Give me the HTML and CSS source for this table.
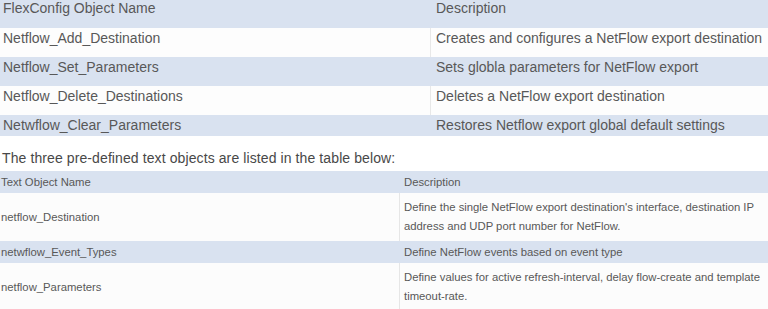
FILE: index.html
```html
<!DOCTYPE html>
<html lang="en">
<head>
    <meta charset="UTF-8">
    <meta name="viewport" content="width=device-width, initial-scale=1.0">
    <title>NetFlow FlexConfig Objects</title>
    <link rel="stylesheet" href="styles.css">
</head>
<body>

    <!-- FlexConfig objects -->
    <table class="flex-table">
        <tr class="head">
            <td class="name">FlexConfig Object Name</td>
            <td class="desc">Description</td>
        </tr>
        <tr>
            <td class="name">Netflow_Add_Destination</td>
            <td class="desc">Creates and configures a NetFlow export destination</td>
        </tr>
        <tr class="shade">
            <td class="name">Netflow_Set_Parameters</td>
            <td class="desc">Sets globla parameters for NetFlow export</td>
        </tr>
        <tr>
            <td class="name">Netflow_Delete_Destinations</td>
            <td class="desc">Deletes a NetFlow export destination</td>
        </tr>
        <tr class="shade last">
            <td class="name">Netwflow_Clear_Parameters</td>
            <td class="desc">Restores Netflow export global default settings</td>
        </tr>
    </table>

    <p class="intro">The three pre-defined text objects are listed in the table below:</p>

    <!-- Text objects -->
    <table class="text-table">
        <tr class="head">
            <td class="name">Text Object Name</td>
            <td class="desc">Description</td>
        </tr>
        <tr class="tall">
            <td class="name">netflow_Destination</td>
            <td class="desc">Define the single NetFlow export destination's interface, destination IP address and UDP port number for NetFlow.</td>
        </tr>
        <tr class="shade">
            <td class="name">netwflow_Event_Types</td>
            <td class="desc">Define NetFlow events based on event type</td>
        </tr>
        <tr class="tall">
            <td class="name">netflow_Parameters</td>
            <td class="desc">Define values for active refresh-interval, delay flow-create and template timeout-rate.</td>
        </tr>
    </table>

</body>
</html>
```

FILE: styles.css
```css
/* General styles */
body {
    margin: 0;
    padding: 0;
    background: #fff;
    font-family: "Liberation Sans", Arial, sans-serif;
    color: #585858;
    overflow: hidden;
}

table {
    width: 100%;
    border-collapse: collapse;
    table-layout: fixed;
}

td {
    padding: 0;
    vertical-align: middle;
    text-align: left;
}

/* FlexConfig table */
.flex-table {
    font-size: 14px;
    line-height: 16px;
}

.flex-table tr {
    height: 29px;
    background-color: #fdfdfd;
}

.flex-table td {
    vertical-align: top;
    padding-top: 2px;
}

.flex-table tr.head,
.flex-table tr.shade {
    background-color: #d9e2f0;
}

.flex-table tr.head {
    height: 28px;
}

.flex-table tr.head td {
    padding-top: 0;
}

.flex-table tr.last {
    height: 21px;
}

.flex-table .name {
    width: 427px;
    padding-left: 3px;
}

.flex-table .desc {
    padding-left: 5px;
    border-left: 1px solid #e8e8e8;
    white-space: nowrap;
}

.flex-table .head .desc,
.flex-table .shade .desc {
    border-left-color: #d9e2f0;
}

/* Paragraph between tables */
.intro {
    margin: 14px 0 5px;
    padding-left: 2px;
    font-size: 14px;
    color: #484848;
    letter-spacing: 0.1px;
}

/* Text objects table */
.text-table {
    font-size: 11.3px;
}

.text-table tr {
    background-color: #fcfcfc;
}

.text-table tr.head,
.text-table tr.shade {
    background-color: #d9e2f0;
}

.text-table tr.head {
    height: 22px;
}

.text-table tr.shade {
    height: 22px;
}

.text-table .tall td {
    padding-top: 5px;
    padding-bottom: 5px;
    line-height: 19px;
}

.text-table .name {
    width: 398px;
    padding-left: 1px;
}

.text-table .desc {
    padding-left: 4px;
    padding-right: 2px;
    border-left: 1px solid #e6e6e6;
}

.text-table .head .desc,
.text-table .shade .desc {
    border-left-color: #d9e2f0;
}
```
